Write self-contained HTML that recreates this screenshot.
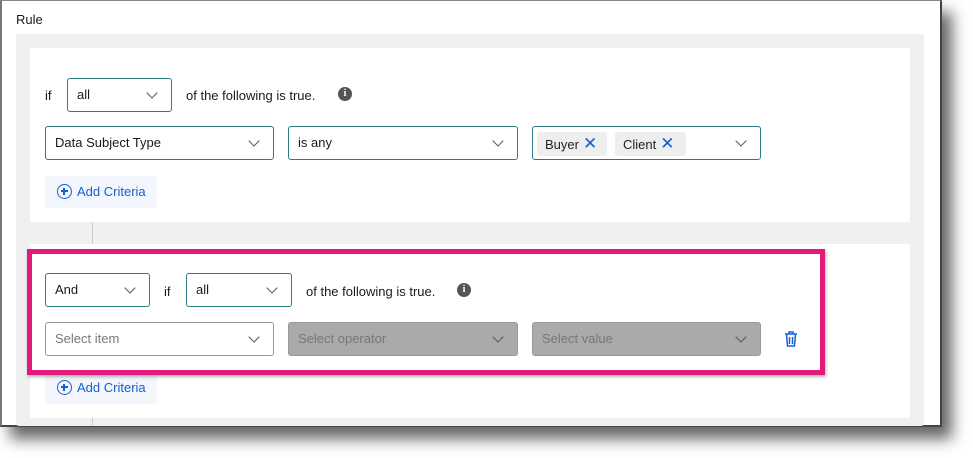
<!DOCTYPE html>
<html><head><style>
*{box-sizing:border-box;margin:0;padding:0}
body{width:973px;height:458px;background:#fff;font-family:"Liberation Sans",sans-serif;font-size:13px;color:#1a1a1a;position:relative;overflow:hidden}
.frame{position:absolute;left:0;top:0;width:942px;height:427px;border:2px solid #444;border-top:1px solid #888;border-left:2px solid #777;background:#fff;box-shadow:10px 12px 14px rgba(0,0,0,.6)}
.abs{position:absolute}
.sel{position:absolute;height:34px;border:1.5px solid #2d7a87;border-radius:3px;background:#fff;padding-left:9px;line-height:32px}
.sel.g{border-color:#999}
.sel.d{background:#aaa;border-color:#999;color:#777}
.ph{color:#777}
.chev{position:absolute;right:15px;top:10px;width:8px;height:8px;border-right:1.2px solid #555;border-bottom:1.2px solid #555;transform:rotate(45deg)}
.info{position:absolute;width:14px;height:14px;border-radius:50%;background:#555;color:#fff;font-size:10px;font-weight:bold;text-align:center;line-height:14px;font-family:"Liberation Serif",serif}
.add{position:absolute;width:112px;height:32px;background:#f3f7fd;border-radius:3px;color:#1560d0;font-size:13px;line-height:32px;padding-left:12px}
.add .c{position:relative;display:inline-block;width:15px;height:15px;border:1.5px solid #1560d0;border-radius:50%;vertical-align:-3px;margin-right:5px}
.add .c:before{content:"";position:absolute;left:2.5px;top:5.25px;width:7px;height:1.5px;background:#1560d0}
.add .c:after{content:"";position:absolute;left:5.25px;top:2.5px;width:1.5px;height:7px;background:#1560d0}
.chip{position:absolute;top:5px;height:24px;background:#eee;border-radius:3px;line-height:24px;padding-left:8px;color:#222}
.chip b{color:#1560d0;font-weight:normal;font-size:17px;margin-left:4px}
</style></head><body>
<div class="frame"></div>
<div class="abs" style="left:16px;top:12px;font-size:13px">Rule</div>
<div class="abs" style="left:16px;top:34px;width:908px;height:392px;background:#f0f0f0;border-radius:3px"></div>
<div class="abs" style="left:30px;top:48px;width:880px;height:174px;background:#fff"></div>
<div class="abs" style="left:92px;top:222px;width:1px;height:22px;background:#ccc"></div>
<div class="abs" style="left:30px;top:244px;width:880px;height:174px;background:#fff"></div>
<div class="abs" style="left:92px;top:418px;width:1px;height:8px;background:#ccc"></div>

<div class="abs" style="left:45px;top:88px">if</div>
<div class="sel" style="left:67px;top:78px;width:105px">all<span class="chev"></span></div>
<div class="abs" style="left:186px;top:88px">of the following is true.</div>
<div class="info" style="left:338px;top:87px">i</div>
<div class="sel" style="left:45px;top:126px;width:229px">Data Subject Type<span class="chev"></span></div>
<div class="sel" style="left:288px;top:126px;width:230px">is any<span class="chev"></span></div>
<div class="sel" style="left:532px;top:126px;width:229px;padding:0"><span class="chip" style="left:4px;width:70px">Buyer<b>✕</b></span><span class="chip" style="left:82px;width:71px">Client<b>✕</b></span><span class="chev"></span></div>
<div class="add" style="left:45px;top:176px"><span class="c"></span>Add Criteria</div>

<div class="sel" style="left:45px;top:273px;width:105px">And<span class="chev"></span></div>
<div class="abs" style="left:164px;top:284px">if</div>
<div class="sel" style="left:186px;top:273px;width:106px">all<span class="chev"></span></div>
<div class="abs" style="left:306px;top:284px">of the following is true.</div>
<div class="info" style="left:457px;top:283px">i</div>
<div class="sel g" style="left:45px;top:322px;width:229px"><span class="ph">Select item</span><span class="chev"></span></div>
<div class="sel d" style="left:288px;top:322px;width:230px">Select operator<span class="chev"></span></div>
<div class="sel d" style="left:532px;top:322px;width:229px">Select value<span class="chev"></span></div>
<svg class="abs" style="left:784px;top:331px" width="14" height="16" viewBox="0 0 14 16" fill="none" stroke="#1560d0" stroke-width="1.5"><path d="M1 3h12M5 3V1h4v2M2.5 3l1 12h7l1-12M5.5 6v7M8.5 6v7"/></svg>
<div class="add" style="left:45px;top:372px"><span class="c"></span>Add Criteria</div>
<div class="abs" style="left:27px;top:249px;width:798px;height:126px;border:5px solid #e21b7a;box-shadow:1px 2px 3px rgba(0,0,0,.3)"></div>
</body></html>
